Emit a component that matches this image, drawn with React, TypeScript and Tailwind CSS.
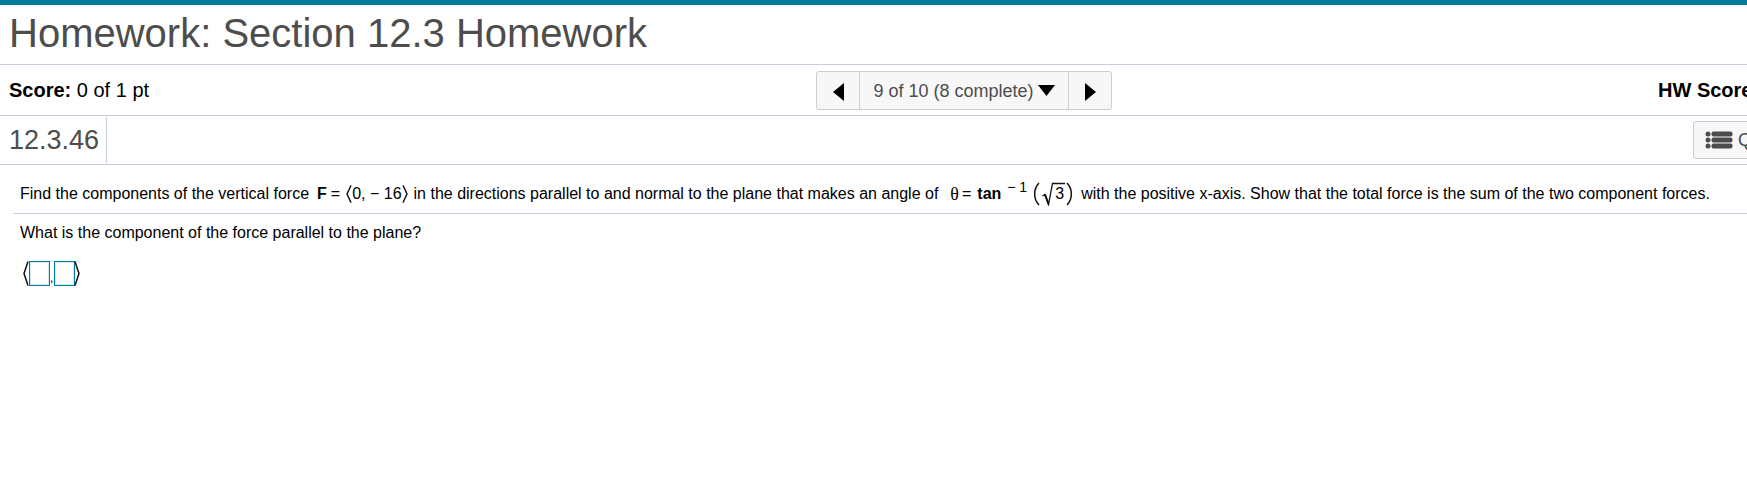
import React from "react";

function AngleBracket({ side, className }: { side: "left" | "right"; className: string }) {
  return (
    <svg viewBox="0 0 6 24" preserveAspectRatio="none" className={className} fill="none" stroke="#111" strokeWidth="1.5" aria-hidden="true">
      <path d={side === "left" ? "M5 0.5 1 12l4 11.5" : "M1 0.5 5 12 1 23.5"} />
    </svg>
  );
}

function Paren({ side }: { side: "left" | "right" }) {
  return (
    <svg viewBox="0 0 7 24" className="h-6 w-[7px] shrink-0" fill="none" stroke="#111" strokeWidth="1.5" aria-hidden="true">
      <path d={side === "left" ? "M6 1C0.2 7 0.2 17 6 23" : "M1 1C6.8 7 6.8 17 1 23"} />
    </svg>
  );
}

function Radical() {
  return (
    <span className="relative ml-[2px] flex h-6 w-6 items-center justify-end pr-[2px]">
      <svg viewBox="0 0 24 24" className="absolute inset-0 h-6 w-6" fill="none" stroke="#111" strokeWidth="1.3" aria-hidden="true">
        <path d="M0.5 14 3 12.500l3.500 10L10.500 1.500h12.500" />
        <path d="M3 12.500l3.500 9.500" strokeWidth="2" />
      </svg>
      <span>3</span>
    </span>
  );
}

function ListIcon() {
  return (
    <svg viewBox="0 0 28 18" className="h-[18px] w-7 shrink-0" fill="#4d4d4d" aria-hidden="true">
      {[3, 9, 15].map((y) => (
        <g key={y}>
          <circle cx="3" cy={y} r="2.5" />
          <rect x="6.5" y={y - 2.5} width="21" height="5" rx="2" />
        </g>
      ))}
    </svg>
  );
}

const answerBox = "h-[25px] w-[21px] border border-[#007a9c] bg-white text-center text-sm shadow-[inset_0_0_0_1px_#d5eaf0] outline-none";

export default function App() {
  return (
    <div className="overflow-hidden bg-white font-['Liberation_Sans',Arial,sans-serif] text-black">
      <header className="border-t-[5px] border-[#007a9c]">
        <h1 className="flex h-[59px] items-center whitespace-nowrap pb-1 pl-[9px] text-[40px] leading-none text-[#4d4d4d]">
          Homework: Section 12.3 Homework
        </h1>
      </header>

      <div className="flex h-[51px] w-[calc(100%+181px)] items-center border-t border-[#c8cedc] text-xl whitespace-nowrap">
        <p className="flex-1 pl-[9px]">
          <b>Score:</b> 0 of 1 pt
        </p>
        <nav aria-label="Questions" className="flex h-[39px] rounded-[3px] border border-[#ccc] bg-[#f7f7f7]">
          <button aria-label="Previous question" className="flex w-[42px] items-center justify-center">
            <svg viewBox="0 0 11 18" className="mt-1 h-[18px] w-[11px]" aria-hidden="true">
              <path d="M11 0v18L0 9z" />
            </svg>
          </button>
          <button className="flex w-[210px] items-center justify-center gap-1 border-x border-[#ccc] pt-px text-lg text-[#4d4d4d]">
            9 of 10 (8 complete)
            <svg viewBox="0 0 17 11" className="h-[11px] w-[17px]" fill="#000" aria-hidden="true">
              <path d="M0 0h17L8.500 11z" />
            </svg>
          </button>
          <button aria-label="Next question" className="flex w-[42px] items-center justify-center">
            <svg viewBox="0 0 11 18" className="mt-1 h-[18px] w-[11px]" aria-hidden="true">
              <path d="M0 0v18l11-9z" />
            </svg>
          </button>
        </nav>
        <div className="flex flex-1 justify-end pl-[9px]">
          <b className="w-[270px]">HW Score:</b>
        </div>
      </div>

      <div className="flex h-[50px] w-[calc(100%+181px)] items-center justify-between border-y border-[#c8cedc]">
        <h2 className="flex h-[46px] items-center border-r border-[#c8cedc] pl-[9px] pr-[7px] text-[27px] leading-none text-[#4d4d4d]">12.3.46</h2>
        <div className="w-[235px]">
          <button className="flex h-[38px] items-center gap-[5px] rounded-[3px] border border-[#ccc] bg-[#f7f7f7] px-[11px] text-lg whitespace-nowrap text-[#4d4d4d]">
            <ListIcon />
            Question Help
          </button>
        </div>
      </div>

      <main className="text-base">
        <div className="ml-[13px] flex h-[49px] items-center border-b border-[#c8cedc] pt-[10px] pl-[7px] whitespace-nowrap">
          <span>Find the components of the vertical force</span>
          <b className="ml-2">F</b>
          <span className="ml-1">=</span>
          <span className="ml-[6px] flex items-center">
            <AngleBracket side="left" className="h-[18px] w-[6px]" />
            <span>0, − 16</span>
            <AngleBracket side="right" className="h-[18px] w-[6px]" />
          </span>
          <span className="ml-[6px]">in the directions parallel to and normal to the plane that makes an angle of</span>
          <span className="ml-3 font-['Liberation_Serif',serif] text-lg">θ</span>
          <span className="ml-[3px]">=</span>
          <b className="ml-[6px]">tan</b>
          <sup className="ml-[6px] text-sm">− 1</sup>
          <span className="ml-[6px] flex items-center">
            <Paren side="left" />
            <Radical />
            <Paren side="right" />
          </span>
          <span className="ml-2">with the positive x-axis. Show that the total force is the sum of the two component forces.</span>
        </div>
        <p className="pt-[7px] pl-5">What is the component of the force parallel to the plane?</p>
        <div className="flex items-center pt-4 pl-[23px]">
          <AngleBracket side="left" className="h-[25px] w-[6px]" />
          <input aria-label="First component" className={answerBox} />
          <span className="w-1 self-end text-xs">,</span>
          <input aria-label="Second component" className={answerBox} />
          <AngleBracket side="right" className="-ml-px h-[25px] w-[6px]" />
        </div>
      </main>
    </div>
  );
}
